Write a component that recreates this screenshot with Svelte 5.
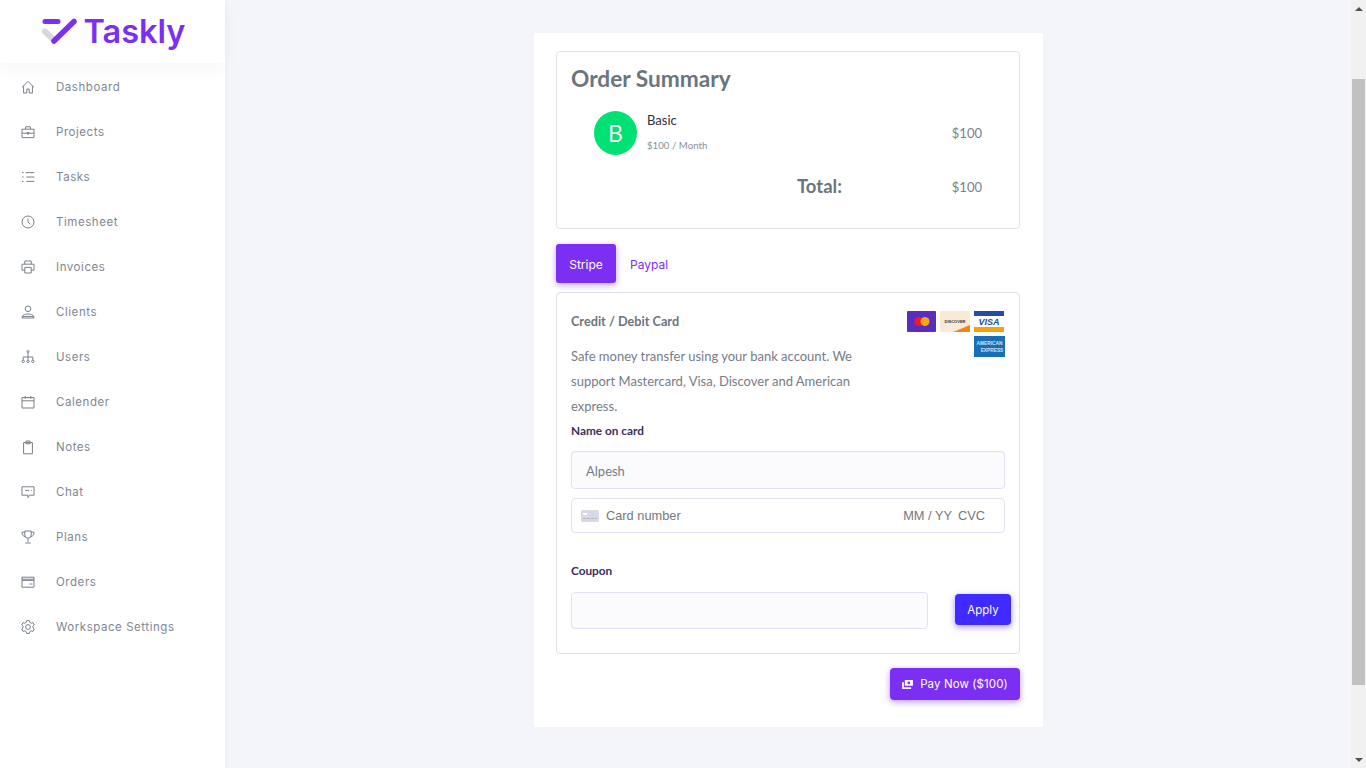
<script>
	const icons = {
		home: 'M2.5 10.5 10 3l7.5 7.5M4.5 9v8.500h4v-5h3v5h4V9',
		briefcase: 'M2.5 6.500h15V17h-15zM7 6.500v-3h6v3M2.500 11.500h15M9 10.500h2v2H9z',
		list: 'M7 4.500h11M8 10h10M8 15.500h10M2.500 4.500h2M2.500 10h2M2.500 15.500h2',
		clock: 'M10 2.500a7.500 7.500 0 1 0 0 15 7.500 7.500 0 0 0 0-15zM10 5.500V10l3 3',
		printer: 'M6 6.500v-4h8v4M2.500 6.500h15V14H14M6 14H2.500V6.500M6 10.500h8v7H6z',
		user: 'M10 2.500a3.500 3.500 0 1 0 0 7 3.500 3.500 0 0 0 0-7zM2.500 17.500c0-3.500 3-5 7.500-5s7.500 1.500 7.500 5zM2.500 15.500h15',
		tree: 'M10 4.500v9M4 14v-4h12v4M10 2a1.200 1.200 0 1 0 0 2.400A1.200 1.200 0 0 0 10 2zM4 14a1.500 1.500 0 1 0 0 3 1.500 1.500 0 0 0 0-3zM10 14a1.500 1.500 0 1 0 0 3 1.500 1.500 0 0 0 0-3zM16 14a1.500 1.500 0 1 0 0 3 1.500 1.500 0 0 0 0-3z',
		calendar: 'M2.500 4.500h15v13h-15zM2.500 8.500h15M6.500 2.500V6M13.500 2.500V6M9 4.500h2',
		clipboard: 'M4.500 4.500h11v14h-11zM7.500 6V2.500h5V6z',
		chat: 'M2.500 3.500h15V14H12l-2 3v-3H2.500zM6.500 8h5M14 8h1',
		trophy: 'M6 2.500h8v5a4 4 0 0 1-8 0zM6 4H2.500c0 3.500 1.500 5 4 5.500M14 4h3.500c0 3.500-1.500 5-4 5.500M10 11.500V16M6.500 17.500h7',
		card: 'M2.500 4h15v12.500h-15zM2.500 8h15M2.500 6.500h15M12 12.500h3.500',
		gear: 'M10 7a3 3 0 1 0 0 6 3 3 0 0 0 0-6zM8.300 2h3.400l.5 2.200 1.800 1 2.200-.7 1.700 3-1.700 1.500v2l1.700 1.500-1.700 3-2.200-.7-1.800 1-.5 2.200H8.300l-.5-2.200-1.800-1-2.200.7-1.700-3L3.800 11V9L2.100 7.500l1.700-3 2.200.7 1.800-1z'
	};

	const navItems = [
		{ label: 'Dashboard', icon: 'home' },
		{ label: 'Projects', icon: 'briefcase' },
		{ label: 'Tasks', icon: 'list' },
		{ label: 'Timesheet', icon: 'clock' },
		{ label: 'Invoices', icon: 'printer' },
		{ label: 'Clients', icon: 'user' },
		{ label: 'Users', icon: 'tree' },
		{ label: 'Calender', icon: 'calendar' },
		{ label: 'Notes', icon: 'clipboard' },
		{ label: 'Chat', icon: 'chat' },
		{ label: 'Plans', icon: 'trophy' },
		{ label: 'Orders', icon: 'card' },
		{ label: 'Workspace Settings', icon: 'gear' }
	];
</script>

<div class="page">
	<aside class="sidebar">
		<div class="brand">
			<svg class="brand-mark" width="38" height="30" viewBox="0 0 38 30" fill="none" stroke-linecap="round">
				<path d="M4 14.500 12 22" stroke="#d8d8d8" stroke-width="6" />
				<path d="M4 4.500h13" stroke="#7b2ff2" stroke-width="5" />
				<path d="M13 24 33 4.500" stroke="#7b2ff2" stroke-width="5.500" />
			</svg>
			<span class="brand-name">Taskly</span>
		</div>
		<nav class="nav">
			{#each navItems as item}
				<div class="nav-item">
					<svg width="16" height="16" viewBox="0 0 20 20" fill="none" stroke="#737b87" stroke-width="1.200">
						<path d={icons[item.icon]} />
					</svg>
					<span>{item.label}</span>
				</div>
			{/each}
		</nav>
	</aside>

	<main class="content">
		<div class="card">
			<section class="box summary">
				<h2>Order Summary</h2>
				<div class="plan-row">
					<div class="avatar">B</div>
					<div class="plan-info">
						<div class="plan-name">Basic</div>
						<div class="plan-sub">$100 / Month</div>
					</div>
					<div class="amount">$100</div>
				</div>
				<div class="total-row">
					<span class="total-label">Total:</span>
					<span class="amount">$100</span>
				</div>
			</section>

			<div class="tabs">
				<button class="tab active">Stripe</button>
				<button class="tab">Paypal</button>
			</div>

			<section class="box pay">
				<div class="pay-head">
					<div class="pay-text">
						<h3>Credit / Debit Card</h3>
						<p>Safe money transfer using your bank account. We support Mastercard, Visa, Discover and American express.</p>
					</div>
					<div class="logos">
						<svg width="29" height="21" viewBox="0 0 29 21">
							<rect width="29" height="21" rx="1" fill="#5b2dbd" />
							<circle cx="12" cy="10.500" r="4.500" fill="#eb1c26" />
							<circle cx="18" cy="10.500" r="4.500" fill="#f9a51a" />
						</svg>
						<svg width="30" height="21" viewBox="0 0 30 21">
							<rect width="30" height="21" rx="1" fill="#f8ead9" />
							<path d="M13 21 30 14v7z" fill="#f58220" />
							<text x="15" y="11.500" text-anchor="middle" class="logo-text" fill="#333">DISCOVER</text>
						</svg>
						<svg class="visa" width="30" height="21" viewBox="0 0 30 21">
							<rect width="30" height="21" fill="#fff" />
							<rect width="30" height="5" fill="#234ba8" />
							<rect y="16" width="30" height="5" fill="#f0a30a" />
							<text x="15" y="14" text-anchor="middle" class="visa-text" fill="#234ba8">VISA</text>
						</svg>
						<svg width="31" height="21" viewBox="0 0 31 21">
							<rect width="31" height="21" fill="#1a6eb5" />
							<text x="15.500" y="9" text-anchor="middle" class="logo-text amex" fill="#cfe3f5">AMERICAN</text>
							<text x="18" y="15.500" text-anchor="middle" class="logo-text amex" fill="#cfe3f5">EXPRESS</text>
						</svg>
					</div>
				</div>

				<div class="field-label name-label">Name on card</div>
				<input class="input name-input" value="Alpesh" />
				<div class="card-field">
					<svg width="18" height="12" viewBox="0 0 18 12">
						<rect width="18" height="12" rx="1.500" fill="#d9d9e6" />
						<rect x="2" y="3" width="4" height="2" fill="#fff" />
						<path d="M2 8.500h14" stroke="#b3b3c4" stroke-width="1.200" stroke-dasharray="3 1" />
					</svg>
					<span class="card-number">Card number</span>
					<span class="card-date">MM / YY</span>
					<span class="card-cvc">CVC</span>
				</div>

				<div class="field-label coupon-label">Coupon</div>
				<div class="coupon-row">
					<input class="input coupon-input" />
					<button class="apply">Apply</button>
				</div>
			</section>

			<div class="actions">
				<button class="pay-now">
					<svg width="11" height="9" viewBox="0 0 12 10" fill="#fff">
						<path d="M3 0h9v6.500H3zM0 2.500h2V8h8v2H0z" />
						<circle cx="7.500" cy="3.300" r="1.500" fill="#7b2ff2" />
					</svg>
					Pay Now ($100)
				</button>
			</div>
		</div>
	</main>

	<div class="scrollbar">
		<div class="arrow up"></div>
		<div class="track">
			<div class="thumb"></div>
		</div>
		<div class="arrow down"></div>
	</div>
</div>

<style>
	:global(body) {
		margin: 0;
		overflow: hidden;
	}

	.page {
		display: flex;
		height: 768px;
		background: #f4f5fa;
		font-family: "Lato", sans-serif;
		color: #6c757d;
	}

	.sidebar {
		width: 225px;
		flex-shrink: 0;
		background: #fff;
		box-shadow: 0 0 4px rgba(0, 0, 0, 0.04);
	}

	.brand {
		height: 63px;
		display: flex;
		align-items: center;
		justify-content: center;
		gap: 5px;
		padding-left: 1px;
		box-sizing: border-box;
		box-shadow: 0 8px 16px rgba(40, 50, 80, 0.035);
	}

	.brand-name {
		font-family: "Inter", sans-serif;
		font-size: 32.5px;
		font-weight: 600;
		color: #7b2ff2;
		line-height: 1;
		margin-top: 2px;
	}

	.nav {
		padding-top: 1px;
	}

	.nav-item {
		height: 45px;
		display: flex;
		align-items: center;
		gap: 20px;
		padding-left: 20px;
		font-family: "Inter", sans-serif;
		font-size: 11.5px;
		letter-spacing: 0.55px;
		color: #7f8792;
	}

	.content {
		flex: 1;
		display: flex;
		justify-content: center;
		padding: 33px 0 0 1px;
		min-width: 0;
	}

	.card {
		width: 509px;
		height: 694px;
		box-sizing: border-box;
		background: #fff;
		padding: 18px 23px 0 22px;
	}

	.box {
		border: 1px solid #dfe1e6;
		border-radius: 4px;
		box-sizing: border-box;
	}

	.summary {
		height: 178px;
		padding: 13px 14px;
	}

	h2 {
		margin: 0;
		font-size: 22.7px;
		line-height: 27px;
		font-weight: 700;
		color: #6c757d;
	}

	.plan-row {
		display: flex;
		align-items: center;
		margin-top: 19px;
		padding: 0 23px;
	}

	.avatar {
		width: 43px;
		height: 44px;
		border-radius: 50%;
		background: #00e173;
		color: #fff;
		font-family: "Open Sans", sans-serif;
		font-size: 23px;
		display: flex;
		align-items: center;
		justify-content: center;
		flex-shrink: 0;
	}

	.plan-info {
		flex: 1;
		margin-left: 10px;
		margin-top: -3px;
	}

	.plan-name {
		font-size: 13px;
		line-height: 16px;
		color: #2c3040;
	}

	.plan-sub {
		margin-top: 11px;
		font-size: 9.7px;
		line-height: 12px;
		color: #8a8f99;
	}

	.amount {
		font-size: 13px;
		color: #7a808a;
	}

	.total-row {
		display: flex;
		align-items: center;
		margin-top: 20px;
		padding-right: 23px;
	}

	.total-row .amount {
		margin-top: 2px;
	}

	.total-label {
		margin-left: 226px;
		width: 155px;
		font-size: 18.5px;
		font-weight: 700;
		color: #6c757d;
	}

	.tabs {
		display: flex;
		align-items: center;
		gap: 14px;
		margin-top: 15px;
		height: 39px;
	}

	button {
		border: 0;
		cursor: pointer;
		font-family: "Inter", sans-serif;
	}

	.tab {
		background: none;
		padding: 0;
		font-size: 12px;
		color: #7b2ff2;
		margin-top: 1px;
	}

	.tab.active {
		width: 60px;
		height: 39px;
		margin-top: 0;
		padding-top: 1px;
		border-radius: 3px;
		background: #7b2ff2;
		color: #fff;
		box-shadow: 0 2px 6px rgba(123, 47, 242, 0.45);
	}

	.pay {
		height: 362px;
		margin-top: 9px;
		padding: 14px 14px 0;
	}

	.pay-head {
		display: flex;
		justify-content: space-between;
	}

	.pay-text {
		width: 290px;
	}

	h3 {
		margin: 7px 0 0;
		font-size: 12.7px;
		line-height: 14px;
		font-weight: 700;
		color: #6c757d;
	}

	.pay-text p {
		margin: 16px 0 0;
		font-size: 13px;
		line-height: 25px;
		color: #767c88;
	}

	.logos {
		width: 99px;
		margin-top: 4px;
		display: flex;
		flex-wrap: wrap;
		justify-content: flex-end;
		gap: 4px;
		align-content: flex-start;
	}

	.visa {
		margin-right: 1px;
	}

	.logo-text {
		font-family: "Liberation Sans", sans-serif;
		font-size: 4px;
		font-weight: 700;
	}

	.logo-text.amex {
		font-size: 4.8px;
	}

	.visa-text {
		font-family: "Liberation Sans", sans-serif;
		font-size: 9px;
		font-weight: 700;
		font-style: italic;
	}

	.field-label {
		font-size: 11.8px;
		line-height: 14px;
		font-weight: 700;
		color: #3a2e5c;
	}

	.name-label {
		margin-top: 5px;
	}

	.input {
		display: block;
		box-sizing: border-box;
		background: #fbfbfe;
		border: 1px solid #e2e0f5;
		border-radius: 4px;
		outline: none;
		font-family: "Lato", sans-serif;
		font-size: 13px;
		color: #767c88;
		padding: 1px 14px 0;
	}

	.name-input {
		width: 100%;
		height: 38px;
		margin-top: 13px;
	}

	.card-field {
		display: flex;
		align-items: center;
		height: 35px;
		margin-top: 9px;
		padding: 0 19px 0 9px;
		box-sizing: border-box;
		border: 1px solid #e2e0f5;
		border-radius: 4px;
		background: #fff;
		font-family: "Liberation Sans", sans-serif;
		font-size: 12.8px;
		color: #77777f;
	}

	.card-number {
		flex: 1;
		margin-left: 7px;
	}

	.card-cvc {
		margin-left: 6px;
	}

	.coupon-label {
		margin-top: 31px;
	}

	.coupon-row {
		display: flex;
		align-items: center;
		margin-top: 14px;
	}

	.coupon-input {
		width: 357px;
		height: 37px;
		flex-shrink: 0;
	}

	.apply {
		width: 56px;
		height: 31px;
		flex-shrink: 0;
		margin: -2px 0 0 27px;
		border-radius: 4px;
		background: #3f2bff;
		color: #fff;
		font-size: 11.5px;
		box-shadow: 0 2px 6px rgba(63, 43, 255, 0.5);
	}

	.actions {
		display: flex;
		justify-content: flex-end;
		margin-top: 14px;
	}

	.pay-now {
		width: 130px;
		height: 32px;
		display: flex;
		align-items: center;
		justify-content: center;
		gap: 7px;
		padding-left: 6px;
		border-radius: 4px;
		background: #7b2ff2;
		color: #fff;
		font-size: 11.5px;
		letter-spacing: 0.1px;
		box-shadow: 0 2px 6px rgba(123, 47, 242, 0.5);
	}

	.scrollbar {
		width: 15px;
		flex-shrink: 0;
		display: flex;
		flex-direction: column;
		background: #f1f1f1;
	}

	.arrow {
		height: 17px;
		display: flex;
		justify-content: center;
		align-items: center;
	}

	.arrow::before {
		content: "";
		border-left: 4px solid transparent;
		border-right: 4px solid transparent;
	}

	.arrow.up::before {
		border-bottom: 4px solid #505050;
	}

	.arrow.down::before {
		border-top: 4px solid #505050;
	}

	.track {
		flex: 1;
		padding-top: 62px;
		box-sizing: border-box;
	}

	.thumb {
		height: 606px;
		margin: 0 1px;
		background: #c1c1c1;
	}
</style>
